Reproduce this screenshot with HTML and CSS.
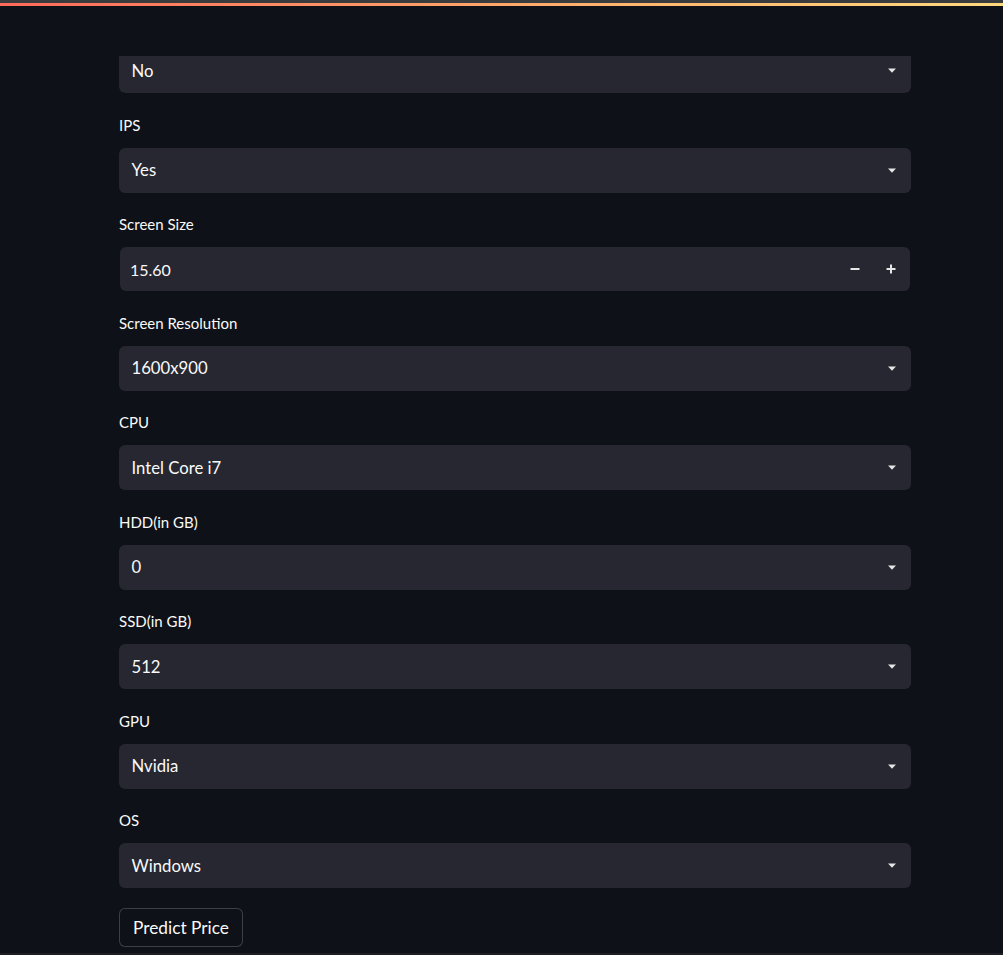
FILE: index.html
```html
<!DOCTYPE html>
<html lang="en">
<head>
<meta charset="utf-8">
<title>Laptop Price Predictor</title>
<link rel="stylesheet" href="styles.css">
</head>
<body>
<div class="app">
  <header class="header">
    <div class="toolbar"></div>
    <div class="decoration"></div>
  </header>
  <main class="main">
    <div class="clip">
      <div class="select first">
        <span class="value">No</span>
        <svg class="arrow" width="8" height="5" viewBox="0 0 8 5"><path d="M0 0.5 H8 L4 4.8 Z" fill="#e6e6e6"/></svg>
      </div>
    </div>

    <div class="field">
      <label class="label">IPS</label>
      <div class="select"><span class="value">Yes</span><svg class="arrow" width="8" height="5" viewBox="0 0 8 5"><path d="M0 0.5 H8 L4 4.8 Z" fill="#e6e6e6"/></svg></div>
    </div>

    <div class="field">
      <label class="label">Screen Size</label>
      <div class="number">
        <span class="value">15.60</span>
        <div class="steppers">
          <svg class="step" width="10" height="10" viewBox="0 0 10 10"><rect x="0.5" y="4" width="9" height="2" fill="#e6e6e6"/></svg>
          <svg class="step" width="10" height="10" viewBox="0 0 10 10"><rect x="0.5" y="4" width="9" height="2" fill="#e6e6e6"/><rect x="4" y="0.5" width="2" height="9" fill="#e6e6e6"/></svg>
        </div>
      </div>
    </div>

    <div class="field">
      <label class="label">Screen Resolution</label>
      <div class="select"><span class="value">1600x900</span><svg class="arrow" width="8" height="5" viewBox="0 0 8 5"><path d="M0 0.5 H8 L4 4.8 Z" fill="#e6e6e6"/></svg></div>
    </div>

    <div class="field">
      <label class="label">CPU</label>
      <div class="select"><span class="value">Intel Core i7</span><svg class="arrow" width="8" height="5" viewBox="0 0 8 5"><path d="M0 0.5 H8 L4 4.8 Z" fill="#e6e6e6"/></svg></div>
    </div>

    <div class="field">
      <label class="label">HDD(in GB)</label>
      <div class="select"><span class="value">0</span><svg class="arrow" width="8" height="5" viewBox="0 0 8 5"><path d="M0 0.5 H8 L4 4.8 Z" fill="#e6e6e6"/></svg></div>
    </div>

    <div class="field">
      <label class="label">SSD(in GB)</label>
      <div class="select"><span class="value">512</span><svg class="arrow" width="8" height="5" viewBox="0 0 8 5"><path d="M0 0.5 H8 L4 4.8 Z" fill="#e6e6e6"/></svg></div>
    </div>

    <div class="field">
      <label class="label">GPU</label>
      <div class="select"><span class="value">Nvidia</span><svg class="arrow" width="8" height="5" viewBox="0 0 8 5"><path d="M0 0.5 H8 L4 4.8 Z" fill="#e6e6e6"/></svg></div>
    </div>

    <div class="field last">
      <label class="label">OS</label>
      <div class="select"><span class="value">Windows</span><svg class="arrow" width="8" height="5" viewBox="0 0 8 5"><path d="M0 0.5 H8 L4 4.8 Z" fill="#e6e6e6"/></svg></div>
    </div>

    <button class="btn" type="button">Predict Price</button>
  </main>
  <div class="bottom-strip"></div>
</div>
</body>
</html>
```

FILE: styles.css
```css
* { box-sizing: border-box; }

html, body {
  margin: 0;
  padding: 0;
  background: #0e1117;
}

body {
  font-family: Lato, "Noto Sans", "Liberation Sans", sans-serif;
  color: #fafafa;
  height: 955px;
  overflow: hidden;
}

.app {
  display: flex;
  flex-direction: column;
  height: 955px;
}

.header {
  height: 56px;
  flex: none;
}

.toolbar {
  height: 3px;
  background: #3a3b3d;
}

.decoration {
  height: 3px;
  background: linear-gradient(90deg, #ff6a5a, #ffb36e 60%, #ffd97e);
}

.main {
  width: 792px;
  margin-left: 119px;
  display: flex;
  flex-direction: column;
}

.clip {
  height: 37px;
  overflow: hidden;
  border-radius: 0 0 6px 6px;
}

.clip .select {
  margin-top: -8px;
}

.field {
  margin-top: 21.5px;
  display: flex;
  flex-direction: column;
}

.field:first-of-type { margin-top: 21.5px; }

.label {
  height: 20px;
  line-height: 20px;
  font-size: 15px;
  margin-bottom: 13px;
}

.select {
  height: 45px;
  background: #262730;
  border-radius: 6px;
  display: flex;
  align-items: center;
  padding: 0 15px 0 12.5px;
  font-size: 16.7px;
}

.value { flex: 1; }

.arrow { flex: none; }

.number {
  height: 44px;
  margin: 0 1px;
  background: #262730;
  border-radius: 6px;
  display: flex;
  align-items: center;
  padding: 0 14px 0 10px;
  font-size: 16px;
}

.steppers {
  display: flex;
  gap: 26px;
  align-items: center;
}

.step { display: block; }

.btn {
  align-self: flex-start;
  margin-top: 19.5px;
  height: 39px;
  width: 124px;
  background: #0e1117;
  border: 1px solid rgba(250, 250, 250, 0.2);
  border-radius: 6px;
  color: #fafafa;
  font-family: Lato, "Noto Sans", "Liberation Sans", sans-serif;
  font-size: 17.3px;
  padding: 0;
}

.bottom-strip {
  margin-top: auto;
  height: 2px;
  background: #1c1e24;
}
```
